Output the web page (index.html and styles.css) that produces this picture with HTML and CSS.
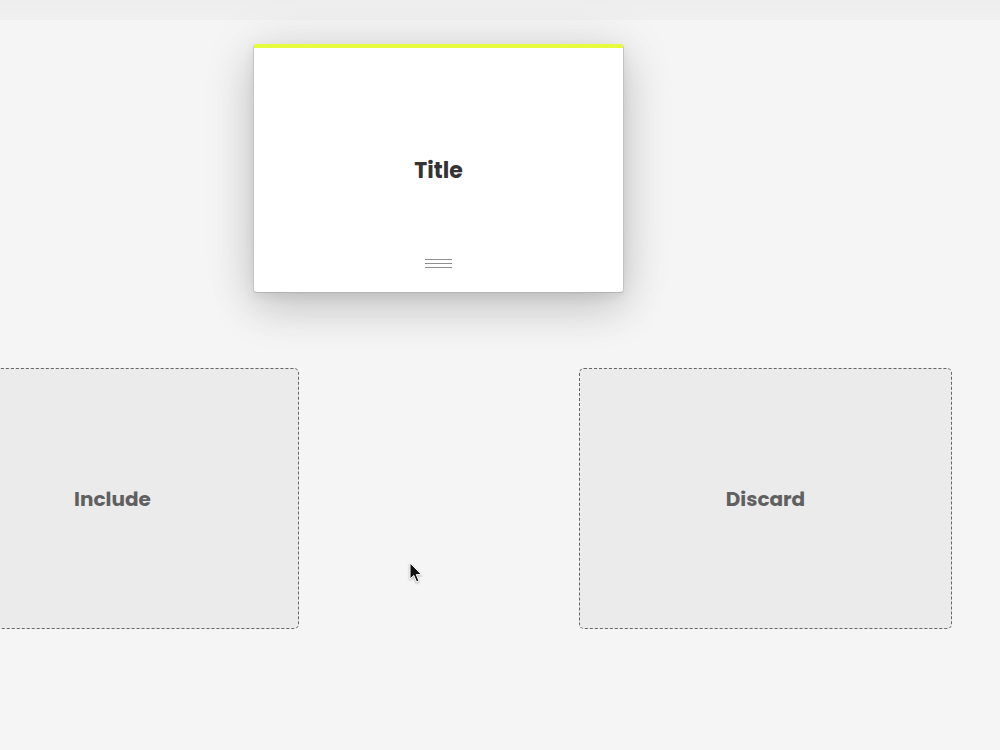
FILE: index.html
```html
<!DOCTYPE html>
<html>
<head>
<meta charset="utf-8">
<link rel="stylesheet" href="styles.css">
</head>
<body>
<div class="topbar"></div>
<main class="stage">
  <div class="card-row">
    <div class="card">
      <div class="card-title">Title</div>
      <div class="handle"><span></span><span></span><span></span></div>
    </div>
  </div>
  <div class="zones">
    <div class="zone">Include</div>
    <div class="zone">Discard</div>
  </div>
  <svg class="cursor" width="14" height="22" viewBox="0 0 14 22">
    <path d="M1 1 L1 17 L4.8 13.4 L7.6 20 L10 19 L7.3 12.6 L12.5 12.6 Z" fill="#111" stroke="#fff" stroke-width="1"/>
  </svg>
</main>
</body>
</html>
```
FILE: styles.css
```css
html, body {
  margin: 0;
  padding: 0;
}
body {
  width: 1000px;
  height: 750px;
  background: #f5f5f5;
  font-family: "Poppins", "Open Sans", "DejaVu Sans", sans-serif;
  overflow: hidden;
}
.topbar {
  height: 20px;
  background: linear-gradient(#eeeeee, #f0f0f0);
}
.stage {
  position: relative;
  height: 730px;
}
.card-row {
  display: flex;
  padding-top: 24px;
  padding-left: 253px;
}
.card {
  width: 369px;
  height: 244px;
  background: #fff;
  border-top: 4px solid #e6fa3e;
  border-left: 1px solid #c4c4c4;
  border-right: 1px solid #c4c4c4;
  border-bottom: 1px solid #b4b4b4;
  border-radius: 4px;
  box-shadow: 0 16px 44px rgba(0,0,0,0.16), 0 0 60px rgba(0,0,0,0.08), 0 4px 12px rgba(0,0,0,0.07);
  display: flex;
  flex-direction: column;
  align-items: center;
}
.card-title {
  margin-top: 110px;
  font-weight: 700;
  font-size: 22px;
  color: #333;
  line-height: 26px;
}
.handle {
  margin-top: 75px;
  display: flex;
  flex-direction: column;
  gap: 3px;
}
.handle span {
  display: block;
  width: 27px;
  height: 1px;
  background: #8e8e8e;
}
.zones {
  display: flex;
  gap: 280px;
  margin-left: -74px;
  margin-top: 75px;
}
.zone {
  width: 373px;
  height: 261px;
  flex: none;
  box-sizing: border-box;
  border: 1px dashed #666;
  border-radius: 5px;
  background: #ebebeb;
  display: flex;
  align-items: center;
  justify-content: center;
  font-weight: 700;
  font-size: 20px;
  color: #606060;
}
.cursor {
  position: absolute;
  left: 409px;
  top: 542px;
  filter: drop-shadow(0 1px 1px rgba(0,0,0,0.3));
}
```
